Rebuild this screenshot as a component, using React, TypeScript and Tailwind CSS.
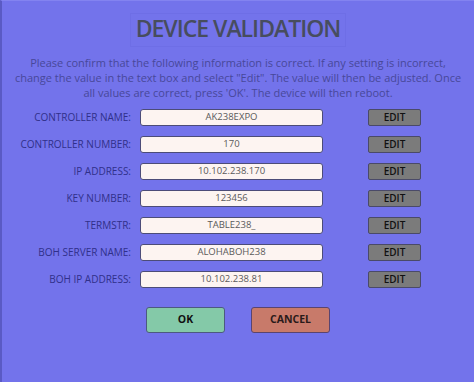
const rows: [string, string][] = [
  ['CONTROLLER NAME:', 'AK238EXPO'],
  ['CONTROLLER NUMBER:', '170'],
  ['IP ADDRESS:', '10.102.238.170'],
  ['KEY NUMBER:', '123456'],
  ['TERMSTR:', 'TABLE238_'],
  ['BOH SERVER NAME:', 'ALOHABOH238'],
  ['BOH IP ADDRESS:', '10.102.238.81'],
]

export default function App() {
  return (
    <div className="h-[382px] w-[474px] overflow-hidden border-t border-l-2 border-t-[#8383f0] border-l-[#5a5ac4] bg-[#7373eb] font-['Open_Sans',sans-serif]">
      <div className="flex justify-center pt-[12px]">
        <h1 className="border border-[#6e6ee6] px-[5px] pt-[1px] pb-[4px] text-[23px] leading-[27px] font-semibold tracking-[-1px] text-[#474d5e]">
          DEVICE VALIDATION
        </h1>
      </div>
      <p className="mt-[8px] text-center text-[11px] leading-[15px] whitespace-nowrap text-[#48489a]">
        Please confirm that the following information is correct. If any setting is incorrect,
        <br />
        change the value in the text box and select "Edit". The value will then be adjusted. Once
        <br />
        all values are correct, press 'OK'. The device will then reboot.
      </p>
      <div className="mt-[9px] flex flex-col gap-[10px]">
        {rows.map(([label, value]) => (
          <div key={label} className="flex items-center">
            <span className="w-[129px] text-right text-[10px] text-[#30308a]">{label}</span>
            <div className="ml-[9px] flex h-[17px] w-[183px] items-center justify-center rounded-[3px] border border-[#4c4c78] bg-[#fdf4f1] text-[9.5px] text-[#5a5a5a]">
              {value}
            </div>
            <button className="ml-[45px] flex h-[17px] w-[53px] items-center justify-center rounded-[2px] border border-[#4a4a68] bg-[#7b7b7b] text-[10px] font-semibold text-[#111]">
              EDIT
            </button>
          </div>
        ))}
      </div>
      <div className="mt-[19px] flex justify-center gap-[26px]">
        <button className="h-[26px] w-[79px] rounded-[3px] border border-[#4c5a80] bg-[#84c9a8] text-[10.5px] font-bold text-[#111]">
          OK
        </button>
        <button className="h-[26px] w-[79px] rounded-[3px] border border-[#5a4470] bg-[#c87a6a] text-[10.5px] font-bold text-[#2a1a1a]">
          CANCEL
        </button>
      </div>
    </div>
  )
}
